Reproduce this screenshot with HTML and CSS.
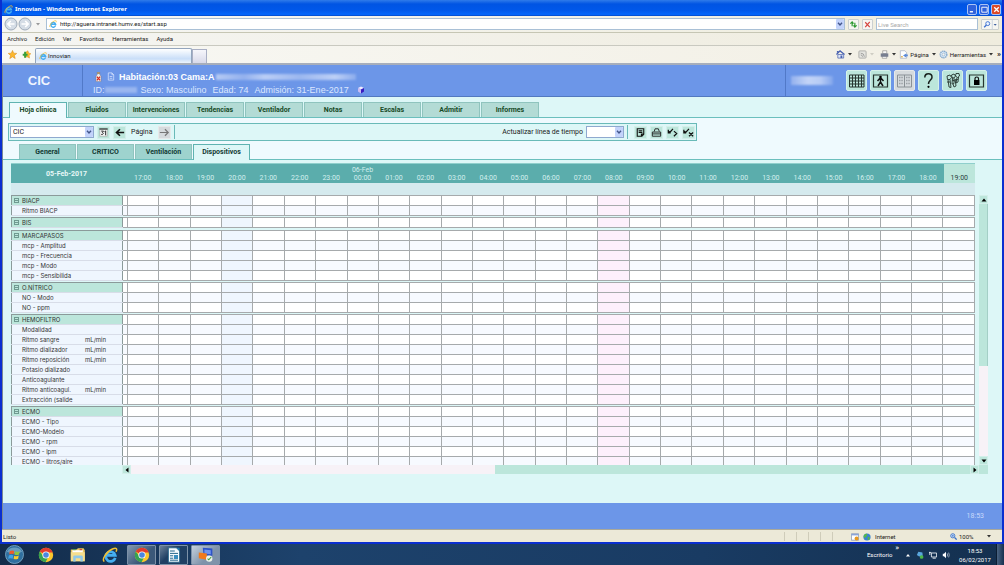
FILE: index.html
```html
<!DOCTYPE html>
<html lang="es">
<head>
<meta charset="utf-8">
<title>Innovian - Windows Internet Explorer</title>
<link rel="stylesheet" href="styles.css">
</head>
<body>
<svg class="defs" aria-hidden="true">
  <symbol id="ie" viewBox="0 0 20 20"><path d="M16.500 13.500A6 6 0 1 1 16.500 10.500H6" fill="none" stroke="#45aef0" stroke-width="3.400"/><path d="M3 18C-1 17 5 6 13 2.500C18 .5 19.500 2 17.500 6" fill="none" stroke="#f2c032" stroke-width="1.800"/></symbol>
  <symbol id="chrome" viewBox="0 0 20 20"><circle cx="10" cy="10" r="9" fill="#fbc72c"/><path d="M10 10 2.200 5.500A9 9 0 0 1 17.800 5.500L18.500 7H10Z" fill="#e23b2e"/><path d="M2.200 5.500A9 9 0 0 0 9.500 19L13 12 7 12Z" fill="#35a252"/><circle cx="10" cy="10" r="4.500" fill="#fff"/><circle cx="10" cy="10" r="3.500" fill="#4a86e0"/></symbol>
  <symbol id="chev" viewBox="0 0 8 10"><rect width="8" height="10" rx="1" fill="#c3d3fb"/><path d="M2 3.800 4 6 6 3.800" fill="none" stroke="#43568c" stroke-width="1.400"/></symbol>
  <symbol id="down" viewBox="0 0 4 3"><path d="M0 0H4L2 2.500Z" fill="currentColor"/></symbol>
</svg>

<div class="window">
  <header class="titlebar">
    <svg class="i10"><use href="#ie"/></svg>
    <h1>Innovian - Windows Internet Explorer</h1>
    <div class="winbuttons">
      <button aria-label="Minimizar"><svg viewBox="0 0 10 10"><path d="M2 7.500H5.500" stroke="#fff" stroke-width="1.500"/></svg></button>
      <button aria-label="Maximizar"><svg viewBox="0 0 10 10"><path d="M2 2.500H8M2 2.500V8H8V2.500" fill="none" stroke="#fff"/></svg></button>
      <button class="close" aria-label="Cerrar"><svg viewBox="0 0 10 10"><path d="M2.500 2.500 7.500 7.500M7.500 2.500 2.500 7.500" stroke="#fff" stroke-width="1.500"/></svg></button>
    </div>
  </header>

  <div class="addressbar">
    <div class="nav">
      <button aria-label="Atrás"><svg viewBox="0 0 14 14"><circle cx="7" cy="7" r="6" fill="#d5dde6" stroke="#9fabb9"/><path d="M10.500 7H4M6.800 4 3.800 7 6.800 10" fill="none" stroke="#fff" stroke-width="1.600"/></svg></button>
      <button aria-label="Adelante"><svg viewBox="0 0 14 14"><circle cx="7" cy="7" r="6" fill="#d5dde6" stroke="#9fabb9"/><path d="M3.500 7H10M7.200 4 10.200 7 7.200 10" fill="none" stroke="#fff" stroke-width="1.600"/></svg></button>
      <svg class="tri grey"><use href="#down"/></svg>
    </div>
    <div class="url"><svg class="i8"><use href="#ie"/></svg><input aria-label="Dirección" value="http://aguera.intranet.humv.es/start.asp"><svg class="chev"><use href="#chev"/></svg></div>
    <button class="sq" aria-label="Actualizar"><svg viewBox="0 0 10 10"><path d="M3.500 7V2M1.500 4 3.500 2 5 4M6.500 3V8M5 6 6.500 8 8.500 6" fill="none" stroke="#2d9a32" stroke-width="1.300"/></svg></button>
    <button class="sq" aria-label="Detener"><svg viewBox="0 0 10 10"><path d="M2.500 2.500 7.500 8M7.500 2 2.500 8" stroke="#d6443c" stroke-width="1.300"/></svg></button>
    <input class="search" aria-label="Buscar" placeholder="Live Search">
    <button class="sq wide" aria-label="Buscar"><svg viewBox="0 0 17 10"><circle cx="6" cy="4" r="2.200" fill="#e8f2ff" stroke="#3c6fd0"/><path d="M4.500 5.500 2 8" stroke="#3c6fd0" stroke-width="1.500"/><path d="M11 0V10" stroke="#c5cfdc"/><path d="M12.500 4.500H16L14.200 6.300Z" fill="#3c5fa0"/></svg></button>
  </div>

  <nav class="menubar">
    <button>Archivo</button><button>Edición</button><button>Ver</button><button>Favoritos</button><button>Herramientas</button><button>Ayuda</button>
  </nav>

  <div class="tabrow">
    <button class="fav" aria-label="Favoritos"><svg viewBox="0 0 10 10"><path d="M5 .5 6.300 3.500 9.700 3.800 7.100 6 8 9.500 5 7.600 2 9.500 2.900 6 .3 3.800 3.700 3.500Z" fill="#fdb82c" stroke="#d88718" stroke-width=".6"/></svg></button>
    <button class="fav" aria-label="Agregar"><svg viewBox="0 0 10 10"><path d="M6.500 .8 7.500 3.500 9.800 4 8 6.200 8.300 9 5.500 7.500 3 8 3 3.500Z" fill="#fdb82c" stroke="#d88718" stroke-width=".5"/><path d="M3.500 2V8.500M.8 5.200H6.200" stroke="#38a03c" stroke-width="2.200"/></svg></button>
    <a class="ietab" href="#app"><svg class="i8"><use href="#ie"/></svg>Innovian</a>
    <button class="newtab" aria-label="Nueva pestaña"></button>
    <div class="commands">
      <button aria-label="Inicio"><svg viewBox="0 0 10 10"><path d="M.5 5 4.500 1 9.500 5" fill="none" stroke="#4a62b0" stroke-width="1.400"/><path d="M2 5H8.500V9H2Z" fill="#dfe6f6" stroke="#4a62b0" stroke-width=".8"/><path d="M5 6H7V9H5ZM1 1H3V3H1Z" fill="#4a62b0"/></svg></button><svg class="tri"><use href="#down"/></svg>
      <button class="apart" aria-label="Fuentes"><svg viewBox="0 0 10 10"><rect x="1" y="1" width="8" height="8" rx="1" fill="#e5e5e0" stroke="#a9a9a6"/><path d="M3 3.500A4 4 0 0 1 7 7.500M3 5.500A2 2 0 0 1 5 7.500" fill="none" stroke="#999"/></svg></button><svg class="tri faint"><use href="#down"/></svg>
      <button class="apart" aria-label="Imprimir"><svg viewBox="0 0 10 10"><path d="M3 .8H7.500V4H3ZM2.500 6.500H7.500V9.200H2.500Z" fill="#f7f7f7" stroke="#777" stroke-width=".6"/><path d="M.8 3.800H9.200V7.500H.8Z" fill="#777e90"/></svg></button><svg class="tri"><use href="#down"/></svg>
      <button><svg viewBox="0 0 10 10"><path d="M1.500 .8H6.500L8.500 3V9.200H1.500Z" fill="#fff" stroke="#9aa6bc" stroke-width=".7"/><path d="M4.500 6 8 3.800V5H9.800V7H8V8.200Z" fill="#5b8ad8"/><path d="M2.500 7.500H4" stroke="#d8a030" stroke-width="1.500"/></svg>Página</button><svg class="tri"><use href="#down"/></svg>
      <button><svg viewBox="0 0 10 10"><circle cx="5" cy="5" r="3.700" fill="#dcebf8" stroke="#86aacd" stroke-width="1.600" stroke-dasharray="1.600 .6"/><circle cx="5" cy="5" r="1.600" fill="#f6f4ee" stroke="#86aacd" stroke-width=".7"/></svg>Herramientas</button><svg class="tri"><use href="#down"/></svg>
      <span class="more">»</span>
    </div>
  </div>

  <main id="app" class="app">
    <section class="patient">
      <div class="unit">CIC</div>
      <div class="info">
        <div class="line">
          <svg class="bottle" viewBox="0 0 8 12"><path d="M2.500 0H5.500V3L7 5V11.500H1V5L2.500 3Z" fill="#ececec" stroke="#777" stroke-width=".5"/><path d="M2.500 .5H5.500V2H2.500Z" fill="#8a6a30"/><path d="M2 5.500 6 10M6 5.500 2 10" stroke="#d8281c" stroke-width="1.500"/></svg>
          <svg class="sheet" viewBox="0 0 8 10"><path d="M1 1H5L7 3V9H1ZM5 1V3H7M2.500 5H5.500M2.500 7H5.500" fill="none" stroke="#dce8ff" stroke-width=".8"/></svg>
          <strong>Habitación:03 Cama:A</strong><span class="smear name"></span>
        </div>
        <div class="line second">
          <span>ID:</span><span class="smear id"></span><span>Sexo: Masculino</span><span>Edad: 74</span><span>Admisión: 31-Ene-2017</span>
          <svg class="cube" viewBox="0 0 8 8"><path d="M4 .5 7 2 4 3.500 1 2Z" fill="#f0eaff"/><path d="M1 2 4 3.500V7.500L1 5.500Z" fill="#c9bcf4"/><path d="M7 2 4 3.500V7.500L7 5.500Z" fill="#3a1cc0"/></svg>
        </div>
      </div>
      <div class="tools">
        <span class="smear user"></span>
        <div class="toolset">
          <button aria-label="Tabla"><svg viewBox="0 0 21 21"><path d="M3.500 5H18V17H3.500ZM3.500 8H18M3.500 11H18M3.500 14H18M6.500 5V17M9.500 5V17M12.500 5V17M15.500 5V17" fill="none" stroke="#26352f" stroke-width="1"/></svg></button>
          <button aria-label="Paciente"><svg viewBox="0 0 21 21"><path d="M3.500 5H17.500V17H3.500Z" fill="none" stroke="#26352f" stroke-width="1.200"/><circle cx="10.500" cy="7" r="1.300"/><path d="M10.500 8V12L8 16M10.500 12 13 16M7.500 11 9.500 8.800H11.500L13.500 11" fill="none" stroke="#111" stroke-width="1.500"/></svg></button>
          <button class="off" disabled aria-label="Registro"><svg viewBox="0 0 21 21"><path d="M3.500 5H17.500V17H3.500ZM10.500 5V17" fill="none" stroke="#8a9196"/><path d="M5 7.500H9M5 10.500H9M5 13.500H9M12 7.500H16M12 10.500H16M12 13.500H16" stroke="#9ba1a6" stroke-width="1.400" stroke-dasharray="1.500 .8"/></svg></button>
          <button aria-label="Ayuda"><svg viewBox="0 0 21 21"><path d="M6.800 7.500C6.800 2.500 14 2.800 14 7.200C14 10 10.500 10.200 10.500 14" fill="none" stroke="#18211d" stroke-width="1.500"/><circle cx="10.500" cy="16.800" r="1.100"/></svg></button>
          <button aria-label="Llaves"><svg viewBox="0 0 21 21"><g fill="none" stroke="#26352f" stroke-width=".9"><path d="M5 6 8 5 9.500 7.500 8 9.500 5.500 9.500ZM9.500 5 12 4 13.500 6 12 8 10 7.500ZM14 3.500 17 3.500 17.500 6 15.500 7.500 13.500 6ZM6 9.500 7 17 9 17.500 8 9.500M10.500 8 10 14 12 13.500 12 8M11 14 12 17 14 16 13 9M15 7.500 14 13 16 12 16.500 7M5 12H8M10 10 13 11M13 10 16 9.500"/></g></svg></button>
          <button aria-label="Bloquear"><svg viewBox="0 0 21 21"><path d="M3.500 5H17.500V17H3.500Z" fill="none" stroke="#26352f" stroke-width="1.200"/><path d="M8 10H13.500V15H8Z"/><path d="M9 10V8.500C9 6.500 12.500 6.500 12.500 8.500V10" fill="none" stroke="#111" stroke-width="1.200"/></svg></button>
        </div>
      </div>
    </section>

    <nav class="tabs primary">
      <a href="#hoja" class="on">Hoja clínica</a><a href="#fluidos">Fluidos</a><a href="#intervenciones">Intervenciones</a><a href="#tendencias">Tendencias</a><a href="#ventilador">Ventilador</a><a href="#notas">Notas</a><a href="#escalas">Escalas</a><a href="#admitir">Admitir</a><a href="#informes">Informes</a>
    </nav>

    <div class="panel">
      <div class="toolbar">
        <span class="drop cic"><select aria-label="Vista"><option>CIC</option></select><svg class="chev"><use href="#chev"/></svg></span>
        <button aria-label="Calendario"><svg viewBox="0 0 14 14"><path d="M3 3.500H11V11H3Z" fill="#f7f7f7" stroke="#999" stroke-width=".6"/><path d="M2.500 3.200H11.500" stroke="#333" stroke-width="1.300"/><path d="M4.500 5.500H7L5.800 7C7.800 7.500 6.500 9.800 4.500 9M8 6.200 9.300 5.300V10" fill="none" stroke="#222"/></svg></button>
        <button aria-label="Página anterior"><svg viewBox="0 0 14 14"><path d="M12 7H4M7.500 3.500 3.800 7 7.500 10.500" fill="none" stroke="#111" stroke-width="1.800"/></svg></button>
        <span class="page">Página</span>
        <button class="off" aria-label="Página siguiente"><svg viewBox="0 0 14 14"><path d="M2 7H11M7.500 3.500 11 7 7.500 10.500" fill="none" stroke="#777" stroke-width="1.300"/></svg></button>
        <i class="sep"></i>
        <label for="tl">Actualizar línea de tiempo</label>
        <span class="drop tl"><select id="tl"><option></option></select><svg class="chev"><use href="#chev"/></svg></span>
        <i class="sep"></i>
        <span class="acts">
        <button aria-label="Nota"><svg viewBox="0 0 14 14"><path d="M3.500 3H10.500V9L8.500 11H3.500ZM5 5.200H9M5 7H9M8 11V8.700H10.500" fill="none" stroke="#111" stroke-width="1.200"/></svg></button>
        <button aria-label="Imprimir"><svg viewBox="0 0 14 14"><path d="M4.500 6 5.500 3H9L10 6M2.500 6.500H11.500V11H2.500ZM2.500 8.500H11.500" fill="none" stroke="#222" stroke-width="1"/></svg></button>
        <button aria-label="Validar"><svg viewBox="0 0 14 14"><path d="M2 5 4 7 7.500 3M8.500 5.500 11.500 8 8.500 11M2.500 4V7.500H5" fill="none" stroke="#111" stroke-width="1.300"/></svg></button>
        <button aria-label="Anular"><svg viewBox="0 0 14 14"><path d="M1.500 5 4 7 7.500 3M2 4V7.500H4.500M7.500 7 12 11M12 7 7.500 11" fill="none" stroke="#111" stroke-width="1.300"/></svg></button>
        </span>
      </div>
      <nav class="tabs secondary">
        <a href="#general">General</a><a href="#critico">CRITICO</a><a href="#ventilacion">Ventilación</a><a href="#dispositivos" class="on">Dispositivos</a>
      </nav>
    </div>

    <section class="chart">
      <div class="sheetcol">
        <div class="times" id="times"><div class="date">05-Feb-2017</div></div>
        <div class="rows" id="rows"></div>
        <div class="hscroll"><button aria-label="Izquierda"><svg viewBox="0 0 8 8"><path d="M5.500 1.500V6.500L2.500 4Z"/></svg></button><i class="track"></i><i class="thumb"></i><button aria-label="Derecha"><svg viewBox="0 0 8 8"><path d="M2.500 1.500V6.500L5.500 4Z"/></svg></button></div>
      </div>
      <div class="vscroll"><button aria-label="Arriba"><svg viewBox="0 0 8 8"><path d="M1.500 5.500H6.500L4 2.500Z"/></svg></button><i class="thumb"></i><i class="track"></i><button aria-label="Abajo"><svg viewBox="0 0 8 8"><path d="M1.500 2.500H6.500L4 5.500Z"/></svg></button><i class="corner"></i></div>
    </section>

    <footer class="appfoot">18:53</footer>
  </main>

  <div class="status">
    <span>Listo</span>
    <span class="cells"><i></i><i></i><i></i><i></i><i></i></span>
    <svg class="i8" viewBox="0 0 10 10"><path d="M.5 1H9.500V9H.5Z" fill="#fff" stroke="#8795ae"/><path d="M.5 1H9.500V3H.5Z" fill="#8aa4d8"/><circle cx="7" cy="7" r="2.500" fill="#e89a20"/></svg>
    <svg class="i8" viewBox="0 0 10 10"><circle cx="5" cy="5" r="4.500" fill="#3a83cf"/><path d="M2 2C4 0 6 1 5 3S3 5 2 6 0 4 2 2M6 5C8 4 9 6 8 8S5 8 6 5" fill="#54b848"/></svg>
    <span class="zone">Internet</span>
    <svg class="i6" viewBox="0 0 10 10"><circle cx="4" cy="4" r="3" fill="#d6e8ff" stroke="#3a72c8" stroke-width="1.300"/><path d="M6.500 6.500 9.500 9.500" stroke="#3a72c8" stroke-width="1.800"/><path d="M2.500 4H5.500M4 2.500V5.500" stroke="#3a72c8"/></svg>
    <span class="pct">100%</span><svg class="tri"><use href="#down"/></svg>
  </div>
</div>

<footer class="taskbar">
  <button class="task orb" aria-label="Inicio"><svg viewBox="0 0 20 20"><circle cx="10" cy="10" r="9.500" fill="#2f6f9f" stroke="#86b4cf" stroke-width=".8"/><path d="M2 7A9 8 0 0 1 18 7Q10 11 2 7" fill="#8dbbd3" opacity=".6"/><path d="M5 6.500Q7.500 5 9.700 6.300L9 9.800Q6.800 8.600 4.300 10Z" fill="#ee5a2a"/><path d="M10.600 6.600Q13 7.800 15.500 6.500L14.800 10Q12.300 11.200 9.900 10Z" fill="#8cc63f"/><path d="M4.100 11Q6.500 9.700 8.800 11L8 14.500Q5.800 13.300 3.300 14.600Z" fill="#3fa3e6"/><path d="M9.700 11.200Q12 12.300 14.500 11.100L13.800 14.500Q11.300 15.700 9 14.600Z" fill="#fccb2a"/></svg></button>
  <button class="task" aria-label="Chrome"><svg class="i16"><use href="#chrome"/></svg></button>
  <button class="task" aria-label="Explorador"><svg class="i16" viewBox="0 0 20 20"><path d="M1 3H8L10 1.500H17L18.500 4V17H1Z" fill="#e8c660"/><path d="M3 4H16V8H3Z" fill="#fff"/><path d="M4 2.500H7V4H4Z" fill="#4aa64a"/><path d="M12 2.500H15V4H12Z" fill="#d84a38"/><path d="M1 6.500H18.500V18H1Z" fill="#f6de8c"/><path d="M4 18V12Q4 10.500 6 10.500H14Q16 10.500 16 12V18H13V14H7V18Z" fill="#8fc8e8"/></svg></button>
  <button class="task" aria-label="Internet Explorer"><svg class="i16"><use href="#ie"/></svg></button>
  <button class="task open" aria-label="Chrome abierto"><svg class="i16"><use href="#chrome"/></svg></button>
  <button class="task open dim" aria-label="Writer"><svg class="i16" viewBox="0 0 20 20"><path d="M3 1H13L17 5V19H3Z" fill="#f4fafd" stroke="#1c5f86"/><path d="M13 1H17V5Z" fill="#1c7ab0"/><path d="M5 5H11M5 8H15M5 11H9M5 14H9M5 16.500H15" stroke="#1c5f86" stroke-width="1.200"/><path d="M10 10H15V15H10Z" fill="#3a8dbd"/></svg></button>
  <button class="task open current" aria-label="Innovian"><svg class="i16" viewBox="0 0 20 20"><path d="M6 1 18 2V11L7 10Z" fill="#2d52c8"/><path d="M8 3 16 4V9L8 8Z" fill="#6d94ee"/><path d="M1 7 11 8V16L1 14Z" fill="#f07a1c"/><circle cx="14" cy="14.500" r="4" fill="#eef4ea"/><path d="M12 14.500 13.500 16 16.500 12.500" fill="none" stroke="#3a9a3a" stroke-width="1.300"/></svg></button>
  <div class="tray">
    <span>Escritorio</span><span class="raise">»</span>
    <svg class="up" viewBox="0 0 6 4"><path d="M1 3.500H5L3 1Z" fill="#fff"/></svg>
    <svg class="i8" viewBox="0 0 10 10"><path d="M1 5 3 1 8 2 8.500 6 4 7Z" fill="#5aa6dc"/><circle cx="7" cy="7.500" r="2.300" fill="#4eb848"/></svg>
    <svg class="i8" viewBox="0 0 10 10"><path d="M3 2.500H9.500V7.500H3ZM1 1V5M0 2H3M4.500 9H8.500" fill="none" stroke="#e8eef4" stroke-width="1.100"/></svg>
    <svg class="i8" viewBox="0 0 10 10"><path d="M1 3.500H2.500L5 1V9L2.500 6.500H1Z" fill="#fff"/><path d="M6.500 3Q7.500 5 6.500 7M8.300 2Q9.800 5 8.300 8" fill="none" stroke="#cfd9e4" stroke-width=".8"/></svg>
    <div class="clock"><span>18:53</span><span>06/02/2017</span></div>
    <button class="desk" aria-label="Mostrar escritorio"></button>
  </div>
</footer>
<script src="script.js"></script>
</body>
</html>
```

FILE: styles.css
```css
* { box-sizing: border-box; }
html, body { height: 100%; }
body {
  margin: 0;
  display: flex;
  flex-direction: column;
  overflow: hidden;
  font: 6px/8px Roboto, "Liberation Sans", sans-serif;
  color: #222;
}
button { font: inherit; color: inherit; padding: 0; margin: 0; border: 0; background: none; display: flex; align-items: center; justify-content: center; }
input, select { font: inherit; color: inherit; padding: 0; margin: 0; border: 0; background: none; min-width: 0; outline: 0; }
a { color: inherit; text-decoration: none; }
svg { display: block; flex: none; }
.defs { position: absolute; width: 0; height: 0; }
.i6 { width: 7px; height: 7px; }
.i8 { width: 8px; height: 8px; }
.i10 { width: 9px; height: 9px; }
.i16 { width: 16px; height: 16px; }
.tri { width: 4px; height: 3px; color: #333; }
.grey { color: #999; }
.faint { color: #cfcdc4; }

.window { flex: 1; min-height: 0; display: flex; flex-direction: column; border: solid #0a2fd0; border-width: 0 2px 2px; background: #ece9d8; }
.titlebar { height: 16px; display: flex; align-items: center; gap: 2px; padding: 2px 1px 0 2px; background: linear-gradient(#2f7bea, #0054e3 25%, #0058ea 65%, #0466fb 90%, #0348c4); }
.titlebar h1 { margin: 0; flex: 1; font: bold 7px/9px "Noto Sans", sans-serif; color: #fff; font-size: 6px; }
.winbuttons { display: flex; gap: 2px; }
.winbuttons button { width: 10px; height: 11px; border: 1px solid #a9c3f5; border-radius: 2px; background: #2f62dc; }
.winbuttons .close { background: #dc4a25; }
.winbuttons svg { width: 9px; height: 9px; }

.addressbar { height: 17px; display: flex; align-items: center; gap: 3px; padding: 0 3px 0 2px; background: linear-gradient(90deg, #f6f6f4, #efeddd); border-bottom: 1px solid #c6c6b4; }
.nav { width: 38px; display: flex; align-items: center; }
.nav button svg { width: 14px; height: 14px; }
.nav .tri { margin-left: 4px; }
.url { flex: 1; height: 12px; display: flex; align-items: center; gap: 3px; padding-left: 2px; background: #fff; border: 1px solid #a9c0d6; margin-left: 1px; }
.url input { flex: 1; }
.chev { width: 8px; height: 10px; }
.sq { width: 11px; height: 11px; border: 1px solid #cbd0d0; border-radius: 1px; background: #f6f6f2; }
.sq svg { width: 9px; height: 9px; }
.sq.wide { width: 18px; }
.sq.wide svg { width: 16px; }
.search { width: 102px; height: 12px; border: 1px solid #a9c0d6; background: #fff; padding-left: 1px; }
.search::placeholder { color: #aaa; opacity: 1; }

.menubar { height: 13px; display: flex; align-items: center; gap: 8px; padding-left: 5px; background: linear-gradient(90deg, #f5f5f2, #efecde); border-bottom: 1px solid #c9c9c0; }
.tabrow { height: 19px; display: flex; align-items: center; padding: 0 1px 0 3px; background: linear-gradient(90deg, #f8f8f4, #f2efe4); border-bottom: 2px solid #a7aebb; }
.fav { width: 14px; }
.fav svg { width: 9px; height: 9px; }
.ietab { width: 157px; height: 15px; align-self: flex-end; display: flex; align-items: center; gap: 1px; margin-left: 2px; padding-left: 3px; border: 1px solid #93a5bd; border-bottom: 0; border-radius: 2px 2px 0 0; background: linear-gradient(#fff, #c9def8 70%, #edf4fd); }
.newtab { width: 15px; height: 14px; align-self: flex-end; border: 1px solid #a9afc4; border-bottom: 0; background: linear-gradient(#f6f6fb, #d9daea); }
.commands { margin-left: auto; display: flex; align-items: center; gap: 3px; }
.commands button { gap: 2px; }
.commands button svg { width: 9px; height: 9px; }
.commands .apart { margin-left: 3px; }
.more { align-self: flex-start; margin-left: 1px; font-size: 8px; font-weight: bold; }

.app { flex: 1; min-height: 0; display: flex; flex-direction: column; border-left: 1px solid #7b8a94; background: #ddf7f7; font-size: 7px; line-height: 10px; }
.patient { height: 32px; display: flex; background: #6c96e8; border-bottom: 1px solid #5279bf; color: #dbe6ff; font: 9px/12px "Liberation Sans", sans-serif; }
.unit { width: 80px; display: flex; align-items: center; justify-content: center; padding-right: 7px; border-right: 1px solid #5179c8; font-size: 13px; font-weight: bold; color: #f0f5ff; }
.info { flex: 1; padding: 5px 0 0 10px; }
.line { display: flex; align-items: center; height: 13px; }
.line strong { color: #fff; margin-left: 4px; }
.second { gap: 6px; white-space: nowrap; }
.bottle { width: 7px; height: 10px; margin: 0 5px 0 2px; }
.sheet { width: 8px; height: 9px; }
.cube { width: 8px; height: 8px; margin-left: 2px; }
.smear { display: block; filter: blur(1px); background: #dce6fb; opacity: .65; }
.smear.name { width: 140px; height: 6px; margin-left: 1px; background: linear-gradient(90deg, #dce6fb, #a9c0f2 20%, #e4ecfd 35%, #b5c9f4 60%, #e8effe 85%, #9db8f0); }
.smear.id { width: 32px; height: 6px; margin: 0 -2px 0 -6px; opacity: .4; }
.tools { width: 217px; display: flex; align-items: center; padding: 0 15px 0 5px; border-left: 1px solid #5179c8; }
.smear.user { width: 42px; height: 9px; background: linear-gradient(90deg, #a9c0f2, #f2f6ff 40%, #e0e9fd 70%, #8daeee); }
.toolset { margin-left: auto; display: flex; gap: 3px; }
.toolset button { width: 21px; height: 21px; border: 1px solid #d5f1ea; border-radius: 2px; background: #bce6db; }
.toolset svg { width: 21px; height: 21px; }
.toolset .off, .toolbar .off { background: #d5dadd; border-color: #e6e9ea; }

.tabs { display: flex; gap: 1px; font-weight: bold; text-align: center; }
.tabs a { height: 15px; line-height: 15px; border: 1px solid #8fc4be; border-bottom: 0; background: #b3dbd5; color: #174a26; }
.primary { margin-top: 5px; padding-left: 6px; border-bottom: 1px solid #6bbfbd; }
.primary a { width: 58px; }
.primary .on, .secondary .on { margin-bottom: -1px; height: 16px; border-color: #5fb3b1; background: #effafe; }
.secondary { padding-left: 16px; border-bottom: 1px solid #6bbfbd; }
.secondary a { width: 57px; background: #9ed3ce; color: #123a34; }
.secondary .on { background: #ddf7f7; color: #123a34; }

.panel { background: #effafe; padding-top: 5px; }
.toolbar { height: 18px; max-width: 689px; margin: 0 5px 3px; padding: 0 1px; display: flex; align-items: center; gap: 3px; border: 1px solid #69bab8; background: #ddf7f7; }
.toolbar button { width: 13px; height: 13px; border: 1px solid #d3efea; background: #bce6db; }
.toolbar button svg { width: 13px; height: 13px; }
.drop { position: relative; height: 12px; display: flex; border: 1px solid #8fa9cf; background: #fff; }
.drop select { width: 100%; appearance: none; padding-left: 2px; }
.drop .chev { position: absolute; right: 0; top: 0; pointer-events: none; }
.cic { width: 84px; }
.tl { width: 38px; }
.page { margin: 0 2px; }
.sep { width: 1px; height: 14px; background: #69bab8; }
.toolbar label { margin-left: auto; }
.acts { display: flex; gap: 3px; padding-left: 3px; }

.chart { flex: 1; min-height: 0; display: flex; gap: 4px; margin: 3px 14px 29px 8px; }
.sheetcol { flex: 1; min-width: 0; display: flex; flex-direction: column; }
.times { display: grid; grid-template-columns: 116px repeat(27, minmax(0, 1fr)); height: 32px; padding-bottom: 12px; background: #d5eaee; border-top: 1px solid #8fcfcc; }
.times > * { background: #5badac; color: #d4efee; display: flex; flex-direction: column; justify-content: flex-end; align-items: center; line-height: 8px; padding-bottom: 1px; }
.times .date { justify-content: center; font-weight: bold; color: #e8f8f7; padding-right: 5px; padding-top: 2px; }
.times .now { background: #bce6db; color: #2a4440; }
.rows { flex: 1; min-height: 0; overflow: hidden; font: 6px/9px Inter, sans-serif; }
.group { width: 100%; table-layout: fixed; border-collapse: collapse; margin-bottom: 1px; border: 1px solid #8b9a9a; }
.group .c-label { width: 111px; }
.group .c-edge { width: 5px; }
.group th, .group td { height: 10px; padding: 0; border: 1px solid #a6aaac; background: #fff; }
.group tr:nth-child(even) td { background: #f7faff; }
.group tr th { border-color: #d8dde8 #8b9a9a #d8dde8 #8b9a9a; background: #eff6fe; font-weight: normal; text-align: left; color: #333; }
.group tr.head th { background: #bce6db; border-color: #8b9a9a #8b9a9a #d8dde8; }
.group tr td.blue { background: #eff6fe; }
.group tr td.pink { background: #fdf0fc; }
.group.single { margin-bottom: 2px; }
.cell { display: flex; padding-left: 10px; white-space: nowrap; }
.head .cell { padding-left: 2px; gap: 3px; align-items: center; }
.cell .nm { width: 63px; }
.head .nm { width: auto; }
.box { width: 5px; height: 5px; border: 1px solid #6f9a90; background: linear-gradient(#6f9a90, #6f9a90) center / 3px 1px no-repeat; }
.hscroll { height: 9px; display: flex; margin: 0 -4px 0 111px; background: #f7f2f7; }
.hscroll button, .vscroll button { flex: none; width: 9px; height: 9px; background: #bce6db; border: 1px solid #d3efea; }
.hscroll svg, .vscroll svg { width: 8px; height: 8px; }
.hscroll .track { flex: 364; }
.hscroll .thumb { flex: 475; background: #bce6db; }
.vscroll { width: 9px; display: flex; flex-direction: column; margin-top: 32px; }
.vscroll .thumb { flex: 162; background: #bce6db; border-right: 1px solid #a4cfc6; }
.vscroll .track { flex: 90; background: #f7f2f7; }
.corner { height: 9px; background: #bce6db; }
.appfoot { height: 26px; display: flex; align-items: center; justify-content: flex-end; padding-right: 18px; background: #6c96e8; color: #c9d9fb; }

.status { height: 13px; display: flex; align-items: center; gap: 4px; padding: 1px 11px 0 1px; border-top: 1px solid #aaa89a; background: #ece9d8; }
.cells { margin-left: auto; display: flex; gap: 11px; padding-right: 14px; }
.cells i { width: 1px; height: 9px; background: #cfccba; }
.zone { width: 72px; margin-right: -1px; }
.zone + .i6 { margin-left: 0; }
.pct { width: 24px; margin-left: -2px; }
.status .tri { margin-left: 0; }

.taskbar { height: 21px; display: flex; align-items: center; gap: 3px; padding-left: 1px; background: linear-gradient(90deg, #132c4a, #1d426c 30%, #193b63 70%, #14304f); color: #fff; }
.task { width: 29px; height: 20px; }
.orb { width: 27px; }
.orb svg { width: 19px; height: 19px; }
.open { border: 1px solid #7d91a8; border-radius: 1px; background: linear-gradient(135deg, #8397ad, #3b5879 60%); }
.dim { background: linear-gradient(135deg, #6d8299, #203f63 40%); }
.current { background: linear-gradient(135deg, #c4d0dc, #7f93aa 60%); }
.tray { margin-left: auto; height: 100%; display: flex; align-items: center; gap: 5px; }
.raise { align-self: flex-start; font-size: 8px; margin: 0 1px 0 -2px; }
.up { width: 6px; height: 4px; }
.clock { display: flex; flex-direction: column; align-items: center; margin-left: 4px; line-height: 9px; }
.desk { width: 8px; height: 100%; background: linear-gradient(90deg, #4a6482, #16304f); border-left: 1px solid #0b1d33; }
```

FILE: script.js
```js
const groups = [
  ["BIACP", [["Ritmo BIACP"]]],
  ["BIS", []],
  ["MARCAPASOS", [["mcp - Amplitud"], ["mcp - Frecuencia"], ["mcp - Modo"], ["mcp - Sensibilida"]]],
  ["O.NÍTRICO", [["NO - Modo"], ["NO - ppm"]]],
  ["HEMOFILTRO", [["Modalidad"], ["Ritmo sangre", "mL/min"], ["Ritmo dializador", "mL/min"], ["Ritmo reposición", "mL/min"], ["Potasio dializado"], ["Anticoagulante"], ["Ritmo anticoagul.", "mL/min"], ["Extracción (salide"]]],
  ["ECMO", [["ECMO - Tipo"], ["ECMO-Modelo"], ["ECMO - rpm"], ["ECMO - lpm"], ["ECMO - litros/aire"]]]
];
const COLUMNS = 27;
const FIRST_HOUR = 17;

const times = document.getElementById("times");
for (let i = 0; i < COLUMNS; i++) {
  const hour = (FIRST_HOUR + i) % 24;
  const day = hour === 0 ? "<span>06-Feb</span>" : "";
  const now = i === COLUMNS - 1 ? ' class="now"' : "";
  times.insertAdjacentHTML("beforeend", `<div${now}>${day}<span>${String(hour).padStart(2, "0")}:00</span></div>`);
}

let cells = "<td></td>";
for (let i = 0; i < COLUMNS; i++) {
  const tint = i === 3 ? ' class="blue"' : i === 15 ? ' class="pink"' : "";
  cells += `<td${tint}></td>`;
}

document.getElementById("rows").innerHTML = groups.map(([title, items]) => {
  const head = `<tr class="head"><th scope="row"><div class="cell"><i class="box"></i><span class="nm">${title}</span></div></th>${cells}</tr>`;
  const body = items.map(([name, unit = ""]) =>
    `<tr><th scope="row"><div class="cell"><span class="nm">${name}</span><span>${unit}</span></div></th>${cells}</tr>`).join("");
  const cols = `<colgroup><col class="c-label"><col class="c-edge"><col span="${COLUMNS}"></colgroup>`;
  return `<table class="group${items.length ? "" : " single"}">${cols}${head}${body}</table>`;
}).join("");
```
